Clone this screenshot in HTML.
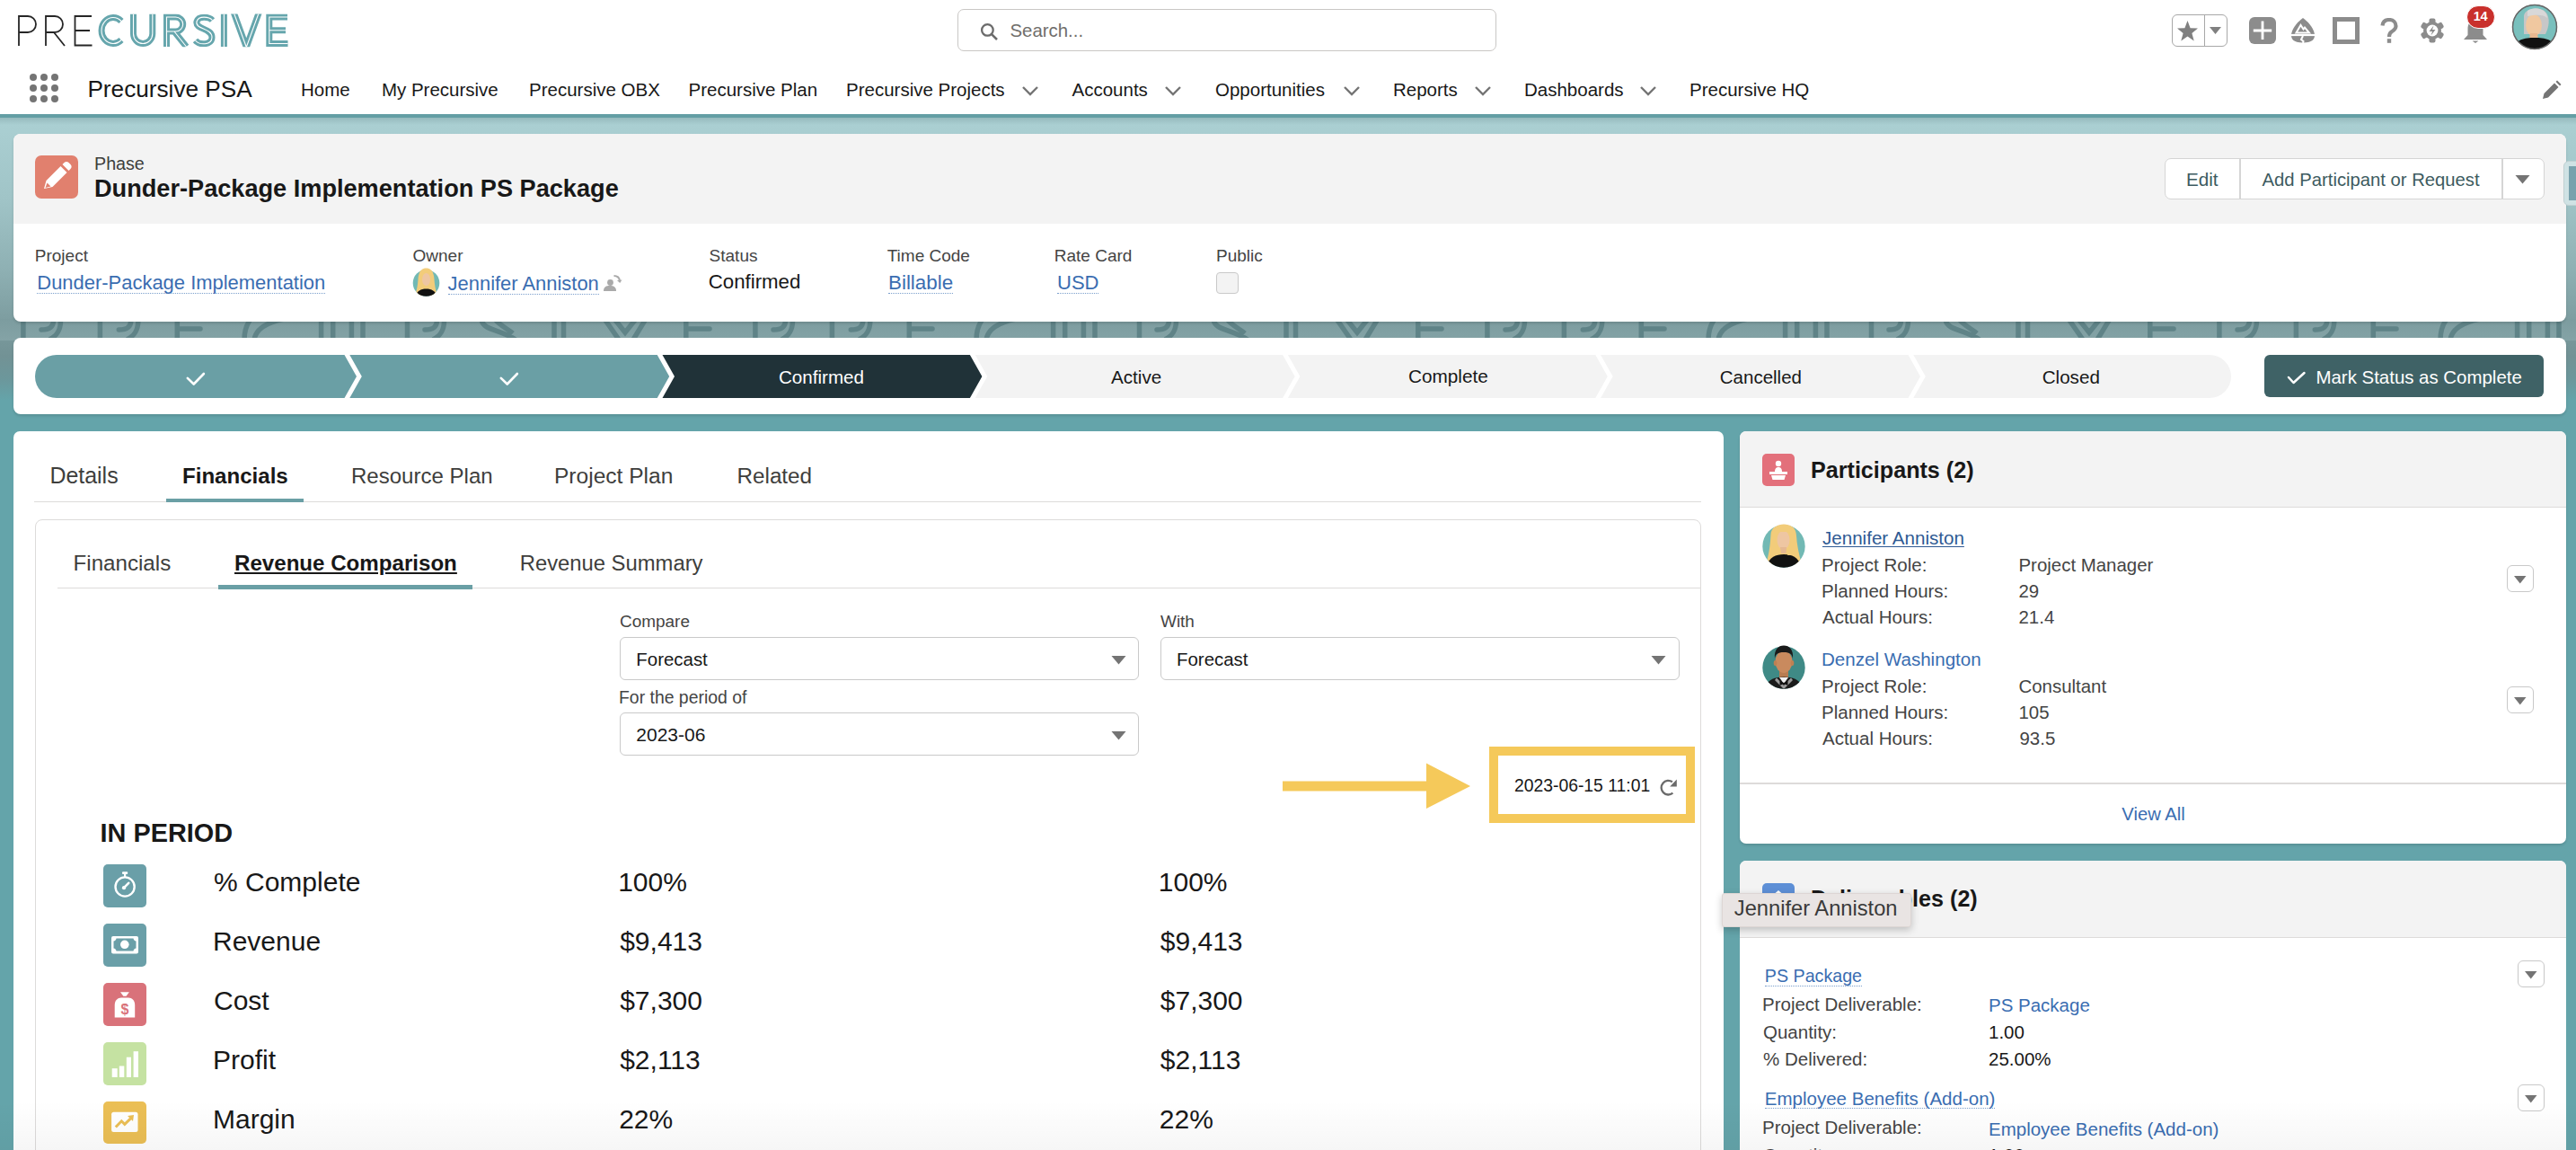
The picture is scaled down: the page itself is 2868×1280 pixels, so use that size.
<!DOCTYPE html><html><head><meta charset="utf-8"><style>
*{margin:0;padding:0;box-sizing:border-box}
html,body{width:2868px;height:1280px;overflow:hidden;background:#64a4aa}
body{position:relative;font-family:"Liberation Sans",sans-serif}
.t{position:absolute;line-height:1;white-space:nowrap}
.r{position:absolute}
.dot{border-bottom:2px dotted #6b8fc0;}
</style></head><body>

<div class="r" style="left:0.0px;top:131.0px;width:2868.0px;height:1149.0px;background:linear-gradient(to bottom,#abd0d3 0px,#a0c4c7 90px,#8eb0b3 170px,#7d9da0 225px,#729295 265px,#6c979b 290px,#64a4aa 315px,#64a4aa 1149px)"></div>
<div class="r" style="left:0.0px;top:355.0px;width:2868.0px;height:24.0px;background:linear-gradient(to bottom,#7c9c9f,#84a3a6)"></div>
<svg class="r" style="left:0px;top:0px;clip-path:inset(357px 0 0 0)" width="2868" height="400" viewBox="0 0 2868 400"><g fill="none" stroke="#5f8387" stroke-width="5.5"><g transform="translate(0 0)"><path d="M25.9,355 V378 M111.4,355 V378 M197.3,355 V378 M453.5,355 V378 M763.8,355 V378 M357.6,355 V378 M370.7,355 V378 M391.4,355 V378 M404,355 V378 M617,355 V378 M627.5,355 V378"/><path d="M67.5,355 C68,368 63,374 55,378 M153.8,355 C154.3,368 149.3,374 141.3,378 M494.5,355 C495,368 490,374 482,378"/><path stroke-linecap="round" d="M59.5,355 C60,364 55,367 46,367 M145.8,355 C146.3,364 141.3,367 132.3,367 M486.5,355 C487,364 482,367 473,367 M200,366 H223 M767,366 H790"/><path d="M272,378 C272,368 274,362 279,355 M283,378 C285,366 296,359 316,355 M536,355 C537,368 556,366 574,378 M551,355 C556,362 565,366 571,371 M673,355 L689,378 M719,355 L705,378 M684,355 L696,370 L708,355"/></g><g transform="translate(815 0)"><path d="M25.9,355 V378 M111.4,355 V378 M197.3,355 V378 M453.5,355 V378 M763.8,355 V378 M357.6,355 V378 M370.7,355 V378 M391.4,355 V378 M404,355 V378 M617,355 V378 M627.5,355 V378"/><path d="M67.5,355 C68,368 63,374 55,378 M153.8,355 C154.3,368 149.3,374 141.3,378 M494.5,355 C495,368 490,374 482,378"/><path stroke-linecap="round" d="M59.5,355 C60,364 55,367 46,367 M145.8,355 C146.3,364 141.3,367 132.3,367 M486.5,355 C487,364 482,367 473,367 M200,366 H223 M767,366 H790"/><path d="M272,378 C272,368 274,362 279,355 M283,378 C285,366 296,359 316,355 M536,355 C537,368 556,366 574,378 M551,355 C556,362 565,366 571,371 M673,355 L689,378 M719,355 L705,378 M684,355 L696,370 L708,355"/></g><g transform="translate(1630 0)"><path d="M25.9,355 V378 M111.4,355 V378 M197.3,355 V378 M453.5,355 V378 M763.8,355 V378 M357.6,355 V378 M370.7,355 V378 M391.4,355 V378 M404,355 V378 M617,355 V378 M627.5,355 V378"/><path d="M67.5,355 C68,368 63,374 55,378 M153.8,355 C154.3,368 149.3,374 141.3,378 M494.5,355 C495,368 490,374 482,378"/><path stroke-linecap="round" d="M59.5,355 C60,364 55,367 46,367 M145.8,355 C146.3,364 141.3,367 132.3,367 M486.5,355 C487,364 482,367 473,367 M200,366 H223 M767,366 H790"/><path d="M272,378 C272,368 274,362 279,355 M283,378 C285,366 296,359 316,355 M536,355 C537,368 556,366 574,378 M551,355 C556,362 565,366 571,371 M673,355 L689,378 M719,355 L705,378 M684,355 L696,370 L708,355"/></g><g transform="translate(2445 0)"><path d="M25.9,355 V378 M111.4,355 V378 M197.3,355 V378 M453.5,355 V378 M763.8,355 V378 M357.6,355 V378 M370.7,355 V378 M391.4,355 V378 M404,355 V378 M617,355 V378 M627.5,355 V378"/><path d="M67.5,355 C68,368 63,374 55,378 M153.8,355 C154.3,368 149.3,374 141.3,378 M494.5,355 C495,368 490,374 482,378"/><path stroke-linecap="round" d="M59.5,355 C60,364 55,367 46,367 M145.8,355 C146.3,364 141.3,367 132.3,367 M486.5,355 C487,364 482,367 473,367 M200,366 H223 M767,366 H790"/><path d="M272,378 C272,368 274,362 279,355 M283,378 C285,366 296,359 316,355 M536,355 C537,368 556,366 574,378 M551,355 C556,362 565,366 571,371 M673,355 L689,378 M719,355 L705,378 M684,355 L696,370 L708,355"/></g></g></svg>
<div class="r" style="left:0.0px;top:0.0px;width:2868.0px;height:127.0px;background:#fff"></div>
<div class="r" style="left:0.0px;top:127.0px;width:2868.0px;height:4.0px;background:#639ea4"></div>
<div class="r" style="left:0.0px;top:131.0px;width:2868.0px;height:8.0px;background:linear-gradient(to bottom,rgba(40,70,75,0.16),rgba(40,70,75,0))"></div>
<svg class="r" style="left:0px;top:0px;" width="340" height="60" viewBox="0 0 340 60"><g fill="none" stroke="#262626" stroke-width="1.8" stroke-linejoin="miter">
<path d="M21,51 V18 H31 A9,9 0 0 1 31,36 H21"/>
<path d="M51,51 V18 H61 A9,9 0 0 1 61,36 H51 M60,36 L72,51"/>
<path d="M102,18 H83.5 V50.5 H102.5 M83.5,34 H100"/>
</g>
<defs><clipPath id="lc"><rect x="100" y="15.6" width="240" height="36.6"/></clipPath></defs><g fill="none" stroke-linecap="butt" clip-path="url(#lc)">
<g stroke="#66a6ad" stroke-width="7">
<path d="M135,23.5 A13,14.5 0 1 0 135,44.5"/>
<path d="M148.5,15.6 V37.5 A10.65,11 0 0 0 169.8,37.5 V15.6"/>
<path d="M185.5,52 V19 H195.5 A8.2,8 0 0 1 195.5,35 H185.5 M194,35 L207.5,52"/>
<path d="M236.5,22.5 C233,18.5 221,17 219,24 C217,33 236,31 236,41.5 C236,50.5 222,50.5 217.5,45"/>
<path d="M249.4,15.6 V52"/>
<path d="M259.5,12 L274.3,52.5 L289,12" stroke-linejoin="miter" stroke-miterlimit="10"/>
<path d="M320,19 H299.8 V48.5 H320.5 M299.8,33.8 H318"/>
</g>
<g stroke="#ffffff" stroke-width="1.1">
<path d="M135,23.5 A13,14.5 0 1 0 135,44.5"/>
<path d="M148.5,15.6 V37.5 A10.65,11 0 0 0 169.8,37.5 V15.6"/>
<path d="M185.5,52 V19 H195.5 A8.2,8 0 0 1 195.5,35 H185.5 M194,35 L207.5,52"/>
<path d="M236.5,22.5 C233,18.5 221,17 219,24 C217,33 236,31 236,41.5 C236,50.5 222,50.5 217.5,45"/>
<path d="M249.4,15.6 V52"/>
<path d="M259.5,12 L274.3,52.5 L289,12" stroke-linejoin="miter" stroke-miterlimit="10"/>
<path d="M320,19 H299.8 V48.5 H320.5 M299.8,33.8 H318"/>
</g></g></svg>
<div class="r" style="left:1066.0px;top:10.0px;width:600.0px;height:47.0px;border:1.5px solid #c9c7c5;border-radius:7px;background:#fff"></div>
<svg class="r" style="left:1089px;top:24px;" width="26" height="24" viewBox="0 0 26 24"><circle cx="10.4" cy="9.4" r="6.3" fill="none" stroke="#6b6b6b" stroke-width="2.3"/><path d="M14.8,13.8 L21,20" stroke="#6b6b6b" stroke-width="2.5"/></svg>
<div class="t" style="left:1124.5px;top:23.7px;font-size:20.4px;color:#706e6b;font-weight:400;">Search...</div>
<div class="r" style="left:2418.0px;top:16.0px;width:62.0px;height:36.0px;border:1.5px solid #a8a8a8;border-radius:6px;background:#fff"></div>
<div class="r" style="left:2453.5px;top:17.0px;width:1.5px;height:34.0px;background:#a8a8a8"></div>
<svg class="r" style="left:2423px;top:20px;" width="26" height="28" viewBox="0 0 26 28"><path d="M12.5,3 L15.6,11.2 L24,11.6 L17.4,17 L19.7,25.5 L12.5,20.6 L5.3,25.5 L7.6,17 L1,11.6 L9.4,11.2 Z" fill="#808080"/></svg>
<svg class="r" style="left:2459px;top:29px;" width="16" height="10" viewBox="0 0 16 10"><path d="M1,1 H14 L7.5,9 Z" fill="#808080"/></svg>
<div class="r" style="left:2504.0px;top:19.0px;width:30.0px;height:30.0px;background:#8c8c8c;border-radius:6px"></div>
<svg class="r" style="left:2504px;top:19px;" width="30" height="30" viewBox="0 0 30 30"><path d="M15,4.5 V25 M4.8,15 H25.2" stroke="#fff" stroke-width="2.8"/></svg>
<svg class="r" style="left:2549px;top:19px;" width="30" height="30" viewBox="0 0 30 30"><path d="M15,1 C10,5 4,10 2,19 C1.5,24 4,28.5 15,28.5 C26,28.5 28.5,24 28,19 C26,10 20,5 15,1 Z" fill="#8c8c8c"/><path d="M1,20 H29" stroke="#fff" stroke-width="2.2"/><path d="M7.5,17.5 L12.5,9 L15.5,13.5 L17,11.5 L22,17.5 Z" fill="none" stroke="#fff" stroke-width="2"/><path d="M15,21 L13,25 L15.5,27 L15,29" fill="none" stroke="#fff" stroke-width="2"/></svg>
<div class="r" style="left:2597.0px;top:19.0px;width:30.0px;height:30.0px;border:5px solid #8c8c8c"></div>
<svg class="r" style="left:2650px;top:20px;" width="20" height="28" viewBox="0 0 20 28"><path d="M2.5,8.5 C3,4 6,2 10,2 C14.5,2 17.5,5 17.5,9 C17.5,12.5 15,14 12.5,15.5 C11,16.5 10,17.5 10,21" fill="none" stroke="#8c8c8c" stroke-width="4.2"/><rect x="7.8" y="23.2" width="4.4" height="4.6" fill="#8c8c8c"/></svg>
<svg class="r" style="left:2694px;top:20px;" width="28" height="28" viewBox="0 0 28 28"><g fill="#8c8c8c"><circle cx="14" cy="14" r="10"/><rect x="10.5" y="0.5" width="7" height="7" rx="2" transform="rotate(0 14 14)"/><rect x="10.5" y="0.5" width="7" height="7" rx="2" transform="rotate(60 14 14)"/><rect x="10.5" y="0.5" width="7" height="7" rx="2" transform="rotate(120 14 14)"/><rect x="10.5" y="0.5" width="7" height="7" rx="2" transform="rotate(180 14 14)"/><rect x="10.5" y="0.5" width="7" height="7" rx="2" transform="rotate(240 14 14)"/><rect x="10.5" y="0.5" width="7" height="7" rx="2" transform="rotate(300 14 14)"/></g><circle cx="14" cy="14" r="6.4" fill="#fff"/><path d="M15.5,8.5 L10.5,15 H14 L12.5,19.5 L17.5,13 H14 Z" fill="#8c8c8c"/></svg>
<svg class="r" style="left:2740px;top:18px;" width="32" height="32" viewBox="0 0 32 32"><path d="M16,4 C10,4 7.5,9 7.5,14 V21 L3,26 H29 L24.5,21 V14 C24.5,9 22,4 16,4 Z" fill="#8c8c8c"/><path d="M12.5,27.5 H19.5 L16,30 Z" fill="#8c8c8c"/></svg>
<div class="r" style="left:2746.0px;top:6.0px;width:31.5px;height:25.5px;background:#c9302c;border-radius:13px;border:1px solid #fff"></div>
<div class="t" style="left:2753.8px;top:11.2px;font-size:14.5px;color:#fff;font-weight:700;letter-spacing:-0.3px">14</div>
<svg class="r" style="left:2796px;top:4px;" width="52" height="52" viewBox="0 0 52 52"><defs><clipPath id="ca"><circle cx="26" cy="26" r="24.5"/></clipPath></defs><circle cx="26" cy="26" r="25" fill="#8a8a8a"/><g clip-path="url(#ca)"><rect width="52" height="52" fill="#79c0bd"/><path d="M14,14 C14,4 36,2 40,12 C44,20 40,30 38,34 L14,34 Z" fill="#c7c7c7"/><ellipse cx="25" cy="24" rx="9" ry="12" fill="#f0c8a0"/><path d="M21,33 L29,33 L30,40 L20,40 Z" fill="#e8b890"/><path d="M2,52 C4,40 14,38 26,38 C38,38 48,40 50,52 Z" fill="#111"/><path d="M18,8 C26,2 40,6 40,16 C36,12 28,12 18,14 Z" fill="#d8d8d8"/></g><circle cx="26" cy="26" r="24.5" fill="none" stroke="#666" stroke-width="1.5"/></svg>
<svg class="r" style="left:33px;top:82px;" width="34" height="34" viewBox="0 0 34 34"><circle cx="4" cy="4" r="4" fill="#747474"/><circle cx="4" cy="16" r="4" fill="#747474"/><circle cx="4" cy="28" r="4" fill="#747474"/><circle cx="16" cy="4" r="4" fill="#747474"/><circle cx="16" cy="16" r="4" fill="#747474"/><circle cx="16" cy="28" r="4" fill="#747474"/><circle cx="28" cy="4" r="4" fill="#747474"/><circle cx="28" cy="16" r="4" fill="#747474"/><circle cx="28" cy="28" r="4" fill="#747474"/></svg>
<div class="t" style="left:97.4px;top:85.6px;font-size:26.2px;color:#181818;font-weight:400;">Precursive PSA</div>
<div class="t" style="left:335.0px;top:89.6px;font-size:20.5px;color:#181818;font-weight:400;">Home</div>
<div class="t" style="left:424.9px;top:89.6px;font-size:20.5px;color:#181818;font-weight:400;">My Precursive</div>
<div class="t" style="left:589.0px;top:89.6px;font-size:20.5px;color:#181818;font-weight:400;">Precursive OBX</div>
<div class="t" style="left:766.5px;top:89.6px;font-size:20.5px;color:#181818;font-weight:400;">Precursive Plan</div>
<div class="t" style="left:942.0px;top:89.6px;font-size:20.5px;color:#181818;font-weight:400;">Precursive Projects</div>
<div class="t" style="left:1193.5px;top:89.6px;font-size:20.5px;color:#181818;font-weight:400;">Accounts</div>
<div class="t" style="left:1353.0px;top:89.6px;font-size:20.5px;color:#181818;font-weight:400;">Opportunities</div>
<div class="t" style="left:1551.0px;top:89.6px;font-size:20.5px;color:#181818;font-weight:400;">Reports</div>
<div class="t" style="left:1697.0px;top:89.6px;font-size:20.5px;color:#181818;font-weight:400;">Dashboards</div>
<div class="t" style="left:1881.0px;top:89.6px;font-size:20.5px;color:#181818;font-weight:400;">Precursive HQ</div>
<svg class="r" style="left:1137px;top:94px;" width="20" height="14" viewBox="0 0 20 14"><path d="M2,3 L10,11 L18,3" fill="none" stroke="#747474" stroke-width="2.4"/></svg>
<svg class="r" style="left:1296px;top:94px;" width="20" height="14" viewBox="0 0 20 14"><path d="M2,3 L10,11 L18,3" fill="none" stroke="#747474" stroke-width="2.4"/></svg>
<svg class="r" style="left:1495px;top:94px;" width="20" height="14" viewBox="0 0 20 14"><path d="M2,3 L10,11 L18,3" fill="none" stroke="#747474" stroke-width="2.4"/></svg>
<svg class="r" style="left:1641px;top:94px;" width="20" height="14" viewBox="0 0 20 14"><path d="M2,3 L10,11 L18,3" fill="none" stroke="#747474" stroke-width="2.4"/></svg>
<svg class="r" style="left:1825px;top:94px;" width="20" height="14" viewBox="0 0 20 14"><path d="M2,3 L10,11 L18,3" fill="none" stroke="#747474" stroke-width="2.4"/></svg>
<svg class="r" style="left:2828px;top:89px;" width="24" height="24" viewBox="0 0 24 24"><path d="M3,21 L4.5,15 L16,3.5 L20.5,8 L9,19.5 Z" fill="#747474"/><path d="M17.5,2 L19,0.5 L23.5,5 L22,6.5 Z" fill="#747474"/></svg>
<div class="r" style="left:14.7px;top:149.0px;width:2842.3px;height:208.6px;background:#fff;border-radius:8px;overflow:hidden;box-shadow:0 2px 3px rgba(0,0,0,0.12)"></div>
<div class="r" style="left:14.7px;top:149.0px;width:2842.3px;height:100.0px;background:#f3f3f3;border-radius:8px 8px 0 0"></div>
<div class="r" style="left:39.0px;top:172.6px;width:48.0px;height:48.0px;background:#e1806e;border-radius:7px"></div>
<svg class="r" style="left:39px;top:172.6px;" width="48" height="48" viewBox="0 0 48 48"><path d="M10,37 L12.5,28 L28.5,12 L35.5,19 L19.5,35 Z" fill="#fff"/><path d="M30.5,10 L32.5,8 C34,6.5 36,6.5 37.5,8 L39.5,10 C41,11.5 41,13.5 39.5,15 L37.5,17 Z" fill="#fff"/><path d="M13.5,30.5 L17.5,34.5 L11.5,36 Z" fill="#e1806e"/></svg>
<div class="t" style="left:105.0px;top:173.0px;font-size:19.7px;color:#3e3e3c;font-weight:400;">Phase</div>
<div class="t" style="left:105.0px;top:195.8px;font-size:27.15px;color:#181818;font-weight:700;">Dunder-Package Implementation PS Package</div>
<div class="r" style="left:2409.5px;top:176.0px;width:423.0px;height:46.3px;border:1.5px solid #d5d5d5;border-radius:7px;background:#fff"></div>
<div class="r" style="left:2493.0px;top:176.0px;width:1.5px;height:46.3px;background:#d5d5d5"></div>
<div class="r" style="left:2785.0px;top:176.0px;width:1.5px;height:46.3px;background:#d5d5d5"></div>
<div class="t" style="left:2434.0px;top:189.5px;font-size:20.66px;color:#3d5b60;font-weight:400;">Edit</div>
<div class="t" style="left:2518.6px;top:189.9px;font-size:20.25px;color:#3d5b60;font-weight:400;">Add Participant or Request</div>
<svg class="r" style="left:2800px;top:194px;" width="17" height="12" viewBox="0 0 17 12"><path d="M0.5,1 H16.5 L8.5,10.5 Z" fill="#747474"/></svg>
<div class="r" style="left:2853.5px;top:179.0px;width:20.0px;height:49.7px;background:#cfe2e4;border-radius:6px;border:1px solid #c0d0d2"></div>
<div class="r" style="left:2860.3px;top:185.0px;width:10.0px;height:37.5px;background:#78a2ad"></div>
<div class="t" style="left:38.8px;top:275.2px;font-size:19px;color:#444444;font-weight:400;">Project</div>
<div class="t" style="left:41.3px;top:304.1px;font-size:21.96px;color:#3a6db1;font-weight:400;border-bottom:1.6px dotted #7b9fcc;padding-bottom:0px;line-height:1">Dunder-Package Implementation</div>
<div class="t" style="left:459.5px;top:275.2px;font-size:19px;color:#444444;font-weight:400;">Owner</div>
<svg class="r" style="left:459px;top:297px;" width="31" height="34" viewBox="0 0 31 34"><defs><clipPath id="cb"><circle cx="15.5" cy="18" r="14.8"/></clipPath></defs><circle cx="15.5" cy="18" r="14.8" fill="#72b9b4"/><g clip-path="url(#cb)"><path d="M15.5,2 C9,2 7,7 6.5,14 C6,21 5,26 3,32 L28,32 C26,26 25,21 24.5,14 C24,7 22,2 15.5,2 Z" fill="#f2cc7a"/><ellipse cx="15.5" cy="14" rx="4.5" ry="7" fill="#eec6a2"/><path d="M3,34 C5,27 9,24.5 15.5,24.5 C22,24.5 26,27 28,34 Z" fill="#111"/></g><path d="M15.5,1.5 C11,1.5 9,4 8,7 L23,7 C22,4 20,1.5 15.5,1.5 Z" fill="#f2cc7a"/></svg>
<div class="t" style="left:498.6px;top:304.9px;font-size:21.93px;color:#3a6db1;font-weight:400;border-bottom:1.6px dotted #7b9fcc;padding-bottom:0px;line-height:1">Jennifer Anniston</div>
<svg class="r" style="left:670px;top:304px;" width="24" height="22" viewBox="0 0 24 22"><circle cx="9.5" cy="10.5" r="3.4" fill="#aaaaaa"/><path d="M2,20 C2,15 5,14 9,14 C13,14 16,15 16,20 Z" fill="#aaaaaa"/><path d="M13.5,3 C17,3 19.5,5 20,8.5" fill="none" stroke="#aaaaaa" stroke-width="2"/><path d="M17,8 L20.2,11 L22.5,7.5 Z" fill="#aaaaaa"/></svg>
<div class="t" style="left:789.6px;top:275.2px;font-size:19px;color:#444444;font-weight:400;">Status</div>
<div class="t" style="left:788.7px;top:302.8px;font-size:22.26px;color:#181818;font-weight:400;">Confirmed</div>
<div class="t" style="left:987.7px;top:275.2px;font-size:19px;color:#444444;font-weight:400;">Time Code</div>
<div class="t" style="left:989.0px;top:303.7px;font-size:22.36px;color:#3a6db1;font-weight:400;border-bottom:1.6px dotted #7b9fcc;padding-bottom:0px;line-height:1">Billable</div>
<div class="t" style="left:1173.8px;top:275.2px;font-size:19px;color:#444444;font-weight:400;">Rate Card</div>
<div class="t" style="left:1177.0px;top:304.0px;font-size:22px;color:#3a6db1;font-weight:400;border-bottom:1.6px dotted #7b9fcc;padding-bottom:0px;line-height:1">USD</div>
<div class="t" style="left:1354.0px;top:275.2px;font-size:19px;color:#444444;font-weight:400;">Public</div>
<div class="r" style="left:1354.0px;top:302.5px;width:24.5px;height:24.5px;border:1.5px solid #c9c9c9;border-radius:4px;background:#f3f3f3"></div>
<div class="r" style="left:14.7px;top:376.0px;width:2842.3px;height:85.0px;background:#fff;border-radius:8px;box-shadow:0 2px 3px rgba(0,0,0,0.12)"></div>
<svg class="r" style="left:0px;top:0px;" width="2868" height="470" viewBox="0 0 2868 470"><path d="M63,395 H383.5 L397.0,419.0 L383.5,443 H63 A24,24 0 0 1 63,395 Z" fill="#6a9fa5"/><path d="M389.3,395 H731.7 L745.2,419.0 L731.7,443 H389.3 L402.8,419.0 Z" fill="#6a9fa5"/><path d="M737.5,395 H1079.9 L1093.4,419.0 L1079.9,443 H737.5 L751.0,419.0 Z" fill="#203238"/><path d="M1085.7,395 H1428.1 L1441.6,419.0 L1428.1,443 H1085.7 L1099.2,419.0 Z" fill="#f3f3f3"/><path d="M1433.8999999999999,395 H1776.3 L1789.8,419.0 L1776.3,443 H1433.8999999999999 L1447.3999999999999,419.0 Z" fill="#f3f3f3"/><path d="M1782.1,395 H2124.5 L2138.0,419.0 L2124.5,443 H1782.1 L1795.6,419.0 Z" fill="#f3f3f3"/><path d="M2130.3,395 H2460 A24,24 0 0 1 2460,443 H2130.3 L2143.8,419.0 Z" fill="#f3f3f3"/></svg>
<svg class="r" style="left:205px;top:407px;" width="26" height="26" viewBox="0 0 26 26"><path d="M3.8,13.9 L10.7,20.5 L21.9,9" fill="none" stroke="#fff" stroke-width="2.6" stroke-linecap="round" stroke-linejoin="round"/></svg>
<svg class="r" style="left:553.7px;top:407px;" width="26" height="26" viewBox="0 0 26 26"><path d="M3.8,13.9 L10.7,20.5 L21.9,9" fill="none" stroke="#fff" stroke-width="2.6" stroke-linecap="round" stroke-linejoin="round"/></svg>
<div class="t" style="left:867.0px;top:409.6px;font-size:20.6px;color:#fff;font-weight:400;">Confirmed</div>
<div class="t" style="left:1237.0px;top:409.5px;font-size:20.66px;color:#181818;font-weight:400;">Active</div>
<div class="t" style="left:1568.0px;top:409.4px;font-size:20.75px;color:#181818;font-weight:400;">Complete</div>
<div class="t" style="left:1914.8px;top:409.6px;font-size:20.5px;color:#181818;font-weight:400;">Cancelled</div>
<div class="t" style="left:2273.7px;top:409.5px;font-size:20.62px;color:#181818;font-weight:400;">Closed</div>
<div class="r" style="left:2521.0px;top:395.3px;width:311.0px;height:47.1px;background:#3f6266;border-radius:6px"></div>
<svg class="r" style="left:2545px;top:408px;" width="26" height="26" viewBox="0 0 26 26"><path d="M3,12 L8.5,18 L20.5,7" fill="none" stroke="#fff" stroke-width="2.5" stroke-linecap="round" stroke-linejoin="round"/></svg>
<div class="t" style="left:2578.5px;top:409.7px;font-size:20.43px;color:#fff;font-weight:400;">Mark Status as Complete</div>
<div class="r" style="left:14.5px;top:480.3px;width:1904.0px;height:860.0px;background:#fff;border-radius:7px"></div>
<div class="r" style="left:38.3px;top:557.5px;width:1856.0px;height:1.5px;background:#dddbda"></div>
<div class="t" style="left:55.4px;top:517.3px;font-size:24.94px;color:#3e3e3c;font-weight:400;">Details</div>
<div class="t" style="left:203.0px;top:518.0px;font-size:24.09px;color:#181818;font-weight:700;">Financials</div>
<div class="r" style="left:184.8px;top:555.0px;width:153.1px;height:4.0px;background:#6a9fa5"></div>
<div class="t" style="left:391.0px;top:518.0px;font-size:24.04px;color:#3e3e3c;font-weight:400;">Resource Plan</div>
<div class="t" style="left:617.0px;top:517.6px;font-size:24.55px;color:#3e3e3c;font-weight:400;">Project Plan</div>
<div class="t" style="left:820.5px;top:517.9px;font-size:24.26px;color:#3e3e3c;font-weight:400;">Related</div>
<div class="r" style="left:39.4px;top:577.5px;width:1854.5px;height:800.0px;border:1.5px solid #dddbda;border-radius:8px;background:#fff"></div>
<div class="r" style="left:64.0px;top:653.5px;width:1829.0px;height:1.5px;background:#dddbda"></div>
<div class="t" style="left:81.6px;top:614.8px;font-size:24.14px;color:#3e3e3c;font-weight:400;">Financials</div>
<div class="t" style="left:261.0px;top:614.8px;font-size:24.12px;color:#181818;font-weight:700;text-decoration:underline;text-decoration-thickness:2px;text-underline-offset:2px">Revenue Comparison</div>
<div class="r" style="left:243.0px;top:651.3px;width:283.0px;height:5.0px;background:#6a9fa5"></div>
<div class="t" style="left:578.7px;top:615.0px;font-size:23.82px;color:#3e3e3c;font-weight:400;">Revenue Summary</div>
<div class="t" style="left:690.0px;top:682.9px;font-size:18.97px;color:#444444;font-weight:400;">Compare</div>
<div class="t" style="left:1292.0px;top:682.9px;font-size:18.97px;color:#444444;font-weight:400;">With</div>
<div class="r" style="left:690.3px;top:709.0px;width:578.0px;height:47.5px;border:1.5px solid #c9c9c9;border-radius:6px;background:#fff"></div>
<div class="t" style="left:708.3px;top:723.7px;font-size:20.46px;color:#181818;font-weight:400;">Forecast</div>
<svg class="r" style="left:1237px;top:729px;" width="17" height="12" viewBox="0 0 17 12"><path d="M0.5,1 H16.5 L8.5,10.5 Z" fill="#747474"/></svg>
<div class="r" style="left:1292.0px;top:709.0px;width:577.5px;height:47.5px;border:1.5px solid #c9c9c9;border-radius:6px;background:#fff"></div>
<div class="t" style="left:1310.0px;top:723.7px;font-size:20.46px;color:#181818;font-weight:400;">Forecast</div>
<svg class="r" style="left:1838px;top:729px;" width="17" height="12" viewBox="0 0 17 12"><path d="M0.5,1 H16.5 L8.5,10.5 Z" fill="#747474"/></svg>
<div class="t" style="left:689.0px;top:766.9px;font-size:19.42px;color:#444444;font-weight:400;">For the period of</div>
<div class="r" style="left:690.3px;top:793.0px;width:578.0px;height:47.5px;border:1.5px solid #c9c9c9;border-radius:6px;background:#fff"></div>
<div class="t" style="left:708.3px;top:807.2px;font-size:21px;color:#181818;font-weight:400;">2023-06</div>
<svg class="r" style="left:1237px;top:813px;" width="17" height="12" viewBox="0 0 17 12"><path d="M0.5,1 H16.5 L8.5,10.5 Z" fill="#747474"/></svg>
<div class="r" style="left:1657.8px;top:830.7px;width:229.0px;height:85.6px;border:10.5px solid #f5c95a"></div>
<div class="t" style="left:1686.0px;top:864.6px;font-size:19.34px;color:#181818;font-weight:400;">2023-06-15 11:01</div>
<svg class="r" style="left:1846px;top:864px;" width="24" height="24" viewBox="0 0 24 24"><path d="M15.9,6.3 A7.8,7.8 0 1 0 16.4,18.7" fill="none" stroke="#6b6b6b" stroke-width="2.3"/><path d="M20.8,3.5 L20.8,11.5 L13.2,11.5 Z" fill="#6b6b6b"/></svg>
<svg class="r" style="left:1420px;top:845px;" width="225" height="60" viewBox="0 0 225 60"><path d="M8,24.5 H168 V4.5 L217,30 L168,55 V35.5 H8 Z" fill="#f5c95a"/></svg>
<div class="t" style="left:111.6px;top:912.6px;font-size:28.85px;color:#181818;font-weight:700;">IN PERIOD</div>
<div class="r" style="left:115.0px;top:962.3px;width:48.0px;height:47.5px;background:#6a9fa8;border-radius:5px"></div>
<svg class="r" style="left:115px;top:962px;" width="48" height="48" viewBox="0 0 48 48"><circle cx="24.1" cy="25" r="10.6" fill="none" stroke="#fff" stroke-width="2.4"/><rect x="21" y="8.3" width="6.2" height="2.8" rx="1" fill="#fff"/><rect x="23" y="10" width="2.2" height="4.5" fill="#fff"/><circle cx="23" cy="26.2" r="2.1" fill="#fff"/><path d="M23,26.2 L28.2,20.8" stroke="#fff" stroke-width="2.6" stroke-linecap="round"/></svg>
<div class="t" style="left:238.0px;top:967.2px;font-size:30px;color:#181818;font-weight:400;">% Complete</div>
<div class="t" style="left:688.2px;top:967.2px;font-size:30px;color:#181818;font-weight:400;">100%</div>
<div class="t" style="left:1289.8px;top:967.2px;font-size:30px;color:#181818;font-weight:400;">100%</div>
<div class="r" style="left:115.0px;top:1028.2px;width:48.0px;height:47.5px;background:#6a9fa8;border-radius:5px"></div>
<svg class="r" style="left:115px;top:1028px;" width="48" height="48" viewBox="0 0 48 48"><rect x="9" y="14" width="30" height="19.5" rx="2" fill="#fff"/><path d="M14.5,16.5 H33.5 C33.5,18 35,19.5 36.5,19.5 V27.5 C35,27.5 33.5,29 33.5,30.5 H14.5 C14.5,29 13,27.5 11.5,27.5 V19.5 C13,19.5 14.5,18 14.5,16.5 Z" fill="#6a9fa8"/><circle cx="23.8" cy="23.3" r="4.8" fill="#fff"/></svg>
<div class="t" style="left:237.0px;top:1033.1px;font-size:30px;color:#181818;font-weight:400;">Revenue</div>
<div class="t" style="left:690.2px;top:1033.1px;font-size:30px;color:#181818;font-weight:400;">$9,413</div>
<div class="t" style="left:1291.8px;top:1033.1px;font-size:30px;color:#181818;font-weight:400;">$9,413</div>
<div class="r" style="left:115.0px;top:1094.1px;width:48.0px;height:47.5px;background:#d9727a;border-radius:5px"></div>
<svg class="r" style="left:115px;top:1094px;" width="48" height="48" viewBox="0 0 48 48"><path d="M19,10.3 H28.9 L25.5,14.8 H22.4 Z" fill="#fff"/><path d="M12.7,38.5 V25 C12.7,19.5 16,16.6 20,16.6 H28 C32,16.6 35.2,19.5 35.2,25 V38.5 Z" fill="#fff"/><text x="24" y="34.8" font-size="16" font-weight="700" fill="#d9727a" text-anchor="middle" font-family="Liberation Sans">$</text></svg>
<div class="t" style="left:238.0px;top:1099.0px;font-size:30px;color:#181818;font-weight:400;">Cost</div>
<div class="t" style="left:690.2px;top:1099.0px;font-size:30px;color:#181818;font-weight:400;">$7,300</div>
<div class="t" style="left:1291.8px;top:1099.0px;font-size:30px;color:#181818;font-weight:400;">$7,300</div>
<div class="r" style="left:115.0px;top:1160.0px;width:48.0px;height:47.5px;background:#c5e2a2;border-radius:5px"></div>
<svg class="r" style="left:115px;top:1160px;" width="48" height="48" viewBox="0 0 48 48"><rect x="9.7" y="29.2" width="6" height="9.8" fill="#fff"/><rect x="17.8" y="26.5" width="5.5" height="12.5" fill="#fff"/><rect x="25.8" y="16.7" width="5.2" height="22.3" fill="#fff"/><rect x="33.6" y="10.2" width="5.4" height="28.8" fill="#fff"/></svg>
<div class="t" style="left:237.0px;top:1164.9px;font-size:30px;color:#181818;font-weight:400;">Profit</div>
<div class="t" style="left:690.2px;top:1164.9px;font-size:30px;color:#181818;font-weight:400;">$2,113</div>
<div class="t" style="left:1291.8px;top:1164.9px;font-size:30px;color:#181818;font-weight:400;">$2,113</div>
<div class="r" style="left:115.0px;top:1225.9px;width:48.0px;height:47.5px;background:#ebbf55;border-radius:5px"></div>
<svg class="r" style="left:115px;top:1225px;" width="48" height="48" viewBox="0 0 48 48"><rect x="9.1" y="12.7" width="29.4" height="22.3" rx="2.5" fill="#fff"/><path d="M13.8,29.5 L20.3,22.8 L23.8,26.3 L30.5,19.8" fill="none" stroke="#ebbf55" stroke-width="3" stroke-linejoin="miter"/><path d="M27,17 L34,16 L33,23 Z" fill="#ebbf55"/></svg>
<div class="t" style="left:237.0px;top:1230.8px;font-size:30px;color:#181818;font-weight:400;">Margin</div>
<div class="t" style="left:689.2px;top:1230.8px;font-size:30px;color:#181818;font-weight:400;">22%</div>
<div class="t" style="left:1290.8px;top:1230.8px;font-size:30px;color:#181818;font-weight:400;">22%</div>
<div class="r" style="left:1937.0px;top:480.3px;width:920.0px;height:458.4px;background:#fff;border-radius:7px;overflow:hidden;box-shadow:0 2px 3px rgba(0,0,0,0.12)"></div>
<div class="r" style="left:1937.0px;top:480.3px;width:920.0px;height:85.1px;background:#f3f3f3;border-radius:7px 7px 0 0;border-bottom:1.5px solid #dddbda"></div>
<div class="r" style="left:1962.0px;top:505.0px;width:36.0px;height:36.0px;background:#e3707b;border-radius:5px"></div>
<svg class="r" style="left:1962px;top:505px;" width="36" height="36" viewBox="0 0 36 36"><circle cx="18" cy="11" r="3.2" fill="#fff"/><path d="M14,20 C14,16 16,15 18,15 C20,15 22,16 22,20 Z" fill="#fff"/><rect x="8" y="20" width="20" height="3" fill="#fff"/><path d="M10,24 H26 L24.5,29 H11.5 Z" fill="#fff"/></svg>
<div class="t" style="left:2016.0px;top:510.7px;font-size:25.14px;color:#181818;font-weight:700;">Participants (2)</div>
<svg class="r" style="left:1962px;top:582px;" width="48" height="50" viewBox="0 0 48 50"><defs><clipPath id="cj"><circle cx="24" cy="26" r="23.7"/></clipPath><clipPath id="cj2"><rect x="0" y="9" width="48" height="41"/></clipPath></defs><circle cx="24" cy="26" r="23.7" fill="#72b9b4"/><g clip-path="url(#cj)"><path d="M24,1.8 C15,1.8 10,6 9.5,13 C9,22 8,34 4,46 L44,46 C41,36 38.5,24 38,14 C37.5,6 33,1.8 24,1.8 Z" fill="#f2cc7a"/><ellipse cx="23.5" cy="19" rx="7" ry="10.5" fill="#eec6a2"/><path d="M20,27 L27,27 L26.5,34 L21,34 Z" fill="#e5b892"/><path d="M5,48 C8,38 15,35 24,35 C33,35 40,38 43,48 L43,54 L5,54 Z" fill="#111"/><path d="M30,10 C33,18 32,28 28,36 L32,36 C36,28 36,16 30,10 Z" fill="#f2cc7a"/></g><path d="M24,1.5 C17,1.5 13,5 11,10 L37,10 C35,5 31,1.5 24,1.5 Z" fill="#f2cc7a"/></svg>
<div class="t" style="left:2029.0px;top:588.9px;font-size:20.59px;color:#2f5a93;font-weight:400;text-decoration:underline;text-decoration-thickness:1.2px;text-underline-offset:1.5px">Jennifer Anniston</div>
<div class="t" style="left:2028.0px;top:618.8px;font-size:20.5px;color:#444444;font-weight:400;">Project Role:</div>
<div class="t" style="left:2247.5px;top:618.9px;font-size:20.43px;color:#444444;font-weight:400;">Project Manager</div>
<div class="t" style="left:2028.0px;top:647.8px;font-size:20.5px;color:#444444;font-weight:400;">Planned Hours:</div>
<div class="t" style="left:2247.5px;top:647.9px;font-size:20.43px;color:#444444;font-weight:400;">29</div>
<div class="t" style="left:2029.0px;top:676.8px;font-size:20.5px;color:#444444;font-weight:400;">Actual Hours:</div>
<div class="t" style="left:2247.5px;top:676.9px;font-size:20.43px;color:#444444;font-weight:400;">21.4</div>
<svg class="r" style="left:1962px;top:717px;" width="48" height="50" viewBox="0 0 48 50"><defs><clipPath id="cd"><circle cx="24" cy="26" r="23.7"/></clipPath><clipPath id="cd2"><rect x="0" y="11" width="48" height="41"/></clipPath></defs><circle cx="24" cy="26" r="23.7" fill="#3f8a86"/><g clip-path="url(#cd)"><path d="M19,30 H29 V38 H19 Z" fill="#b87d52"/><path d="M3,50 C5,40 13,36.5 24,36.5 C35,36.5 43,40 45,50 Z" fill="#1b1b1b"/><path d="M16,37.5 L24,46 L32,37.5 L34,40 L24,50 L14,40 Z" fill="#9a9a9a"/><path d="M19,37 L24,44 L29,37 Z" fill="#f2f2f2"/><path d="M19.5,41 L24,43 L28.5,41 L28.5,46 L24,44 L19.5,46 Z" fill="#111"/></g><ellipse cx="24" cy="19.5" rx="9.5" ry="12.5" fill="#c98a5e"/><ellipse cx="14.5" cy="21" rx="1.8" ry="3" fill="#c08052"/><ellipse cx="33.5" cy="21" rx="1.8" ry="3" fill="#c08052"/><path d="M14,16 C13,6 18,1.5 24,1.5 C30,1.5 35,6 34,16 C33,11 31,9 24,9 C17,9 15,11 14,16 Z" fill="#1a1a1a"/></svg>
<div class="t" style="left:2028.0px;top:724.0px;font-size:20.59px;color:#3a6db1;font-weight:400;">Denzel Washington</div>
<div class="t" style="left:2028.0px;top:753.8px;font-size:20.5px;color:#444444;font-weight:400;">Project Role:</div>
<div class="t" style="left:2247.5px;top:753.9px;font-size:20.43px;color:#444444;font-weight:400;">Consultant</div>
<div class="t" style="left:2028.0px;top:782.8px;font-size:20.5px;color:#444444;font-weight:400;">Planned Hours:</div>
<div class="t" style="left:2247.5px;top:782.9px;font-size:20.43px;color:#444444;font-weight:400;">105</div>
<div class="t" style="left:2029.0px;top:811.8px;font-size:20.5px;color:#444444;font-weight:400;">Actual Hours:</div>
<div class="t" style="left:2248.5px;top:811.9px;font-size:20.43px;color:#444444;font-weight:400;">93.5</div>
<div class="r" style="left:2791.0px;top:628.7px;width:29.5px;height:30.0px;border:1.5px solid #c9c9c9;border-radius:6px;background:#fff"></div>
<svg class="r" style="left:2798px;top:640px;" width="16" height="11" viewBox="0 0 16 11"><path d="M1,1 H14.5 L7.75,9.5 Z" fill="#747474"/></svg>
<div class="r" style="left:2791.0px;top:763.8px;width:29.5px;height:30.0px;border:1.5px solid #c9c9c9;border-radius:6px;background:#fff"></div>
<svg class="r" style="left:2798px;top:775px;" width="16" height="11" viewBox="0 0 16 11"><path d="M1,1 H14.5 L7.75,9.5 Z" fill="#747474"/></svg>
<div class="r" style="left:1937.0px;top:871.0px;width:920.0px;height:1.5px;background:#dddbda"></div>
<div class="t" style="left:2362.3px;top:895.9px;font-size:20.22px;color:#3a6db1;font-weight:400;">View All</div>
<div class="r" style="left:1937.0px;top:958.0px;width:920.0px;height:400.0px;background:#fff;border-radius:7px;overflow:hidden"></div>
<div class="r" style="left:1937.0px;top:958.0px;width:920.0px;height:86.3px;background:#f3f3f3;border-radius:7px 7px 0 0;border-bottom:1.5px solid #dddbda"></div>
<div class="r" style="left:1962.0px;top:983.0px;width:36.0px;height:36.0px;background:#5d8fd6;border-radius:5px"></div>
<svg class="r" style="left:1962px;top:983px;" width="36" height="36" viewBox="0 0 36 36"><path d="M10,15 L18,8 L26,15 Z" fill="#fff"/></svg>
<div class="t" style="left:2016.0px;top:988.2px;font-size:25.14px;color:#181818;font-weight:700;">Deliverables (2)</div>
<div class="t" style="left:1964.8px;top:1076.5px;font-size:19.68px;color:#3a6db1;font-weight:400;border-bottom:1.6px dotted #7b9fcc;padding-bottom:1px;line-height:1">PS Package</div>
<div class="t" style="left:1962.0px;top:1107.6px;font-size:20.5px;color:#444444;font-weight:400;">Project Deliverable:</div>
<div class="t" style="left:2214.0px;top:1109.4px;font-size:20.5px;color:#3a6db1;font-weight:400;">PS Package</div>
<div class="t" style="left:1963.0px;top:1138.6px;font-size:20.5px;color:#444444;font-weight:400;">Quantity:</div>
<div class="t" style="left:2214.0px;top:1138.6px;font-size:20.5px;color:#181818;font-weight:400;">1.00</div>
<div class="t" style="left:1963.0px;top:1168.6px;font-size:20.5px;color:#444444;font-weight:400;">% Delivered:</div>
<div class="t" style="left:2214.0px;top:1168.6px;font-size:20.5px;color:#181818;font-weight:400;">25.00%</div>
<div class="t" style="left:1964.8px;top:1212.6px;font-size:20.53px;color:#3a6db1;font-weight:400;border-bottom:1.6px dotted #7b9fcc;padding-bottom:0px;line-height:1">Employee Benefits (Add-on)</div>
<div class="t" style="left:1962.0px;top:1244.6px;font-size:20.5px;color:#444444;font-weight:400;">Project Deliverable:</div>
<div class="t" style="left:2214.0px;top:1246.6px;font-size:20.5px;color:#3a6db1;font-weight:400;">Employee Benefits (Add-on)</div>
<div class="t" style="left:1963.0px;top:1275.6px;font-size:20.5px;color:#444444;font-weight:400;">Quantity:</div>
<div class="t" style="left:2214.0px;top:1275.6px;font-size:20.5px;color:#181818;font-weight:400;">1.00</div>
<div class="r" style="left:2803.0px;top:1068.8px;width:29.5px;height:30.0px;border:1.5px solid #c9c9c9;border-radius:6px;background:#fff"></div>
<svg class="r" style="left:2810px;top:1080px;" width="16" height="11" viewBox="0 0 16 11"><path d="M1,1 H14.5 L7.75,9.5 Z" fill="#747474"/></svg>
<div class="r" style="left:2803.0px;top:1206.8px;width:29.5px;height:30.0px;border:1.5px solid #c9c9c9;border-radius:6px;background:#fff"></div>
<svg class="r" style="left:2810px;top:1218px;" width="16" height="11" viewBox="0 0 16 11"><path d="M1,1 H14.5 L7.75,9.5 Z" fill="#747474"/></svg>
<div class="r" style="left:1917.4px;top:993.5px;width:210.6px;height:38.3px;background:#e9e4e3;border-radius:3px;border:1px solid #ddd6d4;box-shadow:0 3px 8px rgba(0,0,0,0.22)"></div>
<div class="t" style="left:1930.8px;top:999.9px;font-size:23.7px;color:#3a3a3a;font-weight:400;">Jennifer Anniston</div>
<div class="r" style="left:0.0px;top:1225.0px;width:2868.0px;height:55.0px;background:linear-gradient(to bottom,rgba(0,0,0,0),rgba(0,0,0,0.035));pointer-events:none"></div>
</body></html>
